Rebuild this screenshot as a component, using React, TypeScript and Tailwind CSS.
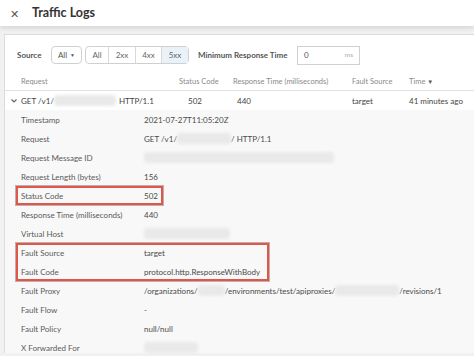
import React from "react";

const font = { fontFamily: "Lato, 'Open Sans', sans-serif" };

function Redacted({ w }: { w: number }) {
	return (
		<span
			className="inline-block h-[11px] rounded-sm bg-[#e9e9e9] align-middle blur-[1.5px]"
			style={{ width: w }}
		/>
	);
}

function DetailRow({
	label,
	children,
}: {
	label: string;
	children?: React.ReactNode;
}) {
	return (
		<div className="flex h-[19px] items-center">
			<span className="w-[123px] shrink-0 text-[#5a5a5a]">{label}</span>
			<span className="flex items-center whitespace-nowrap text-[#4a4a4a]">
				{children}
			</span>
		</div>
	);
}

function Highlight({
	width,
	children,
}: {
	width: number;
	children: React.ReactNode;
}) {
	return (
		<div
			className="-ml-[5px] border-2 border-[#e0574a] pl-[3px] shadow-[0_0_0_1px_rgba(90,40,40,0.35)]"
			style={{ width }}
		>
			<div className="-my-[2px]">{children}</div>
		</div>
	);
}

export default function App() {
	return (
		<div
			className="h-[356px] w-[474px] overflow-hidden bg-[#f1f1f1] text-[8px] leading-none"
			style={font}
		>
			<div className="relative z-10 flex h-[26px] items-center gap-[13px] bg-white pl-[10px] shadow-[0_2px_5px_rgba(0,0,0,0.12)]">
				<span className="text-[11px] font-light text-[#555]">✕</span>
				<span className="text-[12.5px] font-bold text-[#333]">Traffic Logs</span>
			</div>

			<div className="ml-[4px] mt-[8px] h-[319px] border border-r-0 border-[#dcdcdc] bg-white">
				{/* filters */}
				<div className="flex h-[38px] items-center pl-[12px] pt-[2px]">
					<span className="w-[34px] font-bold text-[#555]">Source</span>
					<div className="flex h-[18px] w-[31px] items-center justify-center gap-[3px] rounded-sm border border-[#d0d0d0] text-[#555]">
						All <span className="text-[5px]">▼</span>
					</div>
					<div className="ml-[3px] flex h-[18px] rounded-sm border border-[#d0d0d0] text-[#666]">
						<span className="flex w-[23px] items-center justify-center border-r border-[#d8d8d8]">All</span>
						<span className="flex w-[27px] items-center justify-center border-r border-[#d8d8d8]">2xx</span>
						<span className="flex w-[26px] items-center justify-center border-r border-[#d8d8d8]">4xx</span>
						<span className="flex w-[26px] items-center justify-center bg-[#e8f2f8]">5xx</span>
					</div>
					<span className="ml-[9px] w-[99px] font-bold text-[#555]">Minimum Response Time</span>
					<div className="flex h-[19px] w-[63px] items-center justify-between border border-[#d0d0d0] px-[6px] text-[#555]">
						<span>0</span>
						<span className="text-[6.5px] text-[#aaa]">ms</span>
					</div>
				</div>

				{/* table header */}
				<div className="flex h-[18px] items-center border-b border-[#e2e2e2] text-[7.5px] text-[#8a8a8a]">
					<span className="w-[174px] pl-[16px]">Request</span>
					<span className="w-[54px]">Status Code</span>
					<span className="w-[119px]">Response Time (milliseconds)</span>
					<span className="w-[57px]">Fault Source</span>
					<span className="flex items-center gap-[2px]">
						Time<span className="text-[6px] text-[#555]">▼</span>
					</span>
				</div>

				{/* main row */}
				<div className="flex h-[20px] items-center border-b border-[#e2e2e2] text-[#444]">
					<span className="flex w-[174px] items-center pl-[5px]">
						<svg width="10" height="6" viewBox="0 0 10 6" className="mr-[1px]">
							<polyline
								points="1.5,1.5 4,4 6.5,1.5"
								fill="none"
								stroke="#666"
								strokeWidth="1.2"
							/>
						</svg>
						<span>GET /v1/</span>
						<Redacted w={62} />
						<span className="ml-[3px]">HTTP/1.1</span>
					</span>
					<span className="w-[58px] pl-[9px]">502</span>
					<span className="w-[115px]">440</span>
					<span className="w-[57px]">target</span>
					<span>41 minutes ago</span>
				</div>

				{/* details */}
				<div className="h-[243px] bg-[#f8f8f8] pl-[16px] -mt-[1px]">
					<DetailRow label="Timestamp">2021-07-27T11:05:20Z</DetailRow>
					<DetailRow label="Request">
						GET /v1/<Redacted w={54} />/ HTTP/1.1
					</DetailRow>
					<DetailRow label="Request Message ID">
						<Redacted w={190} />
					</DetailRow>
					<DetailRow label="Request Length (bytes)">156</DetailRow>
					<Highlight width={147}>
						<DetailRow label="Status Code">502</DetailRow>
					</Highlight>
					<DetailRow label="Response Time (milliseconds)">440</DetailRow>
					<DetailRow label="Virtual Host">
						<Redacted w={86} />
					</DetailRow>
					<Highlight width={253}>
						<DetailRow label="Fault Source">target</DetailRow>
						<DetailRow label="Fault Code">protocol.http.ResponseWithBody</DetailRow>
					</Highlight>
					<DetailRow label="Fault Proxy">
						/organizations/<Redacted w={27} />/environments/test/apiproxies/<Redacted w={64} />/revisions/1
					</DetailRow>
					<DetailRow label="Fault Flow">-</DetailRow>
					<DetailRow label="Fault Policy">null/null</DetailRow>
					<DetailRow label="X Forwarded For">
						<Redacted w={54} />
					</DetailRow>
				</div>
			</div>
		</div>
	);
}
